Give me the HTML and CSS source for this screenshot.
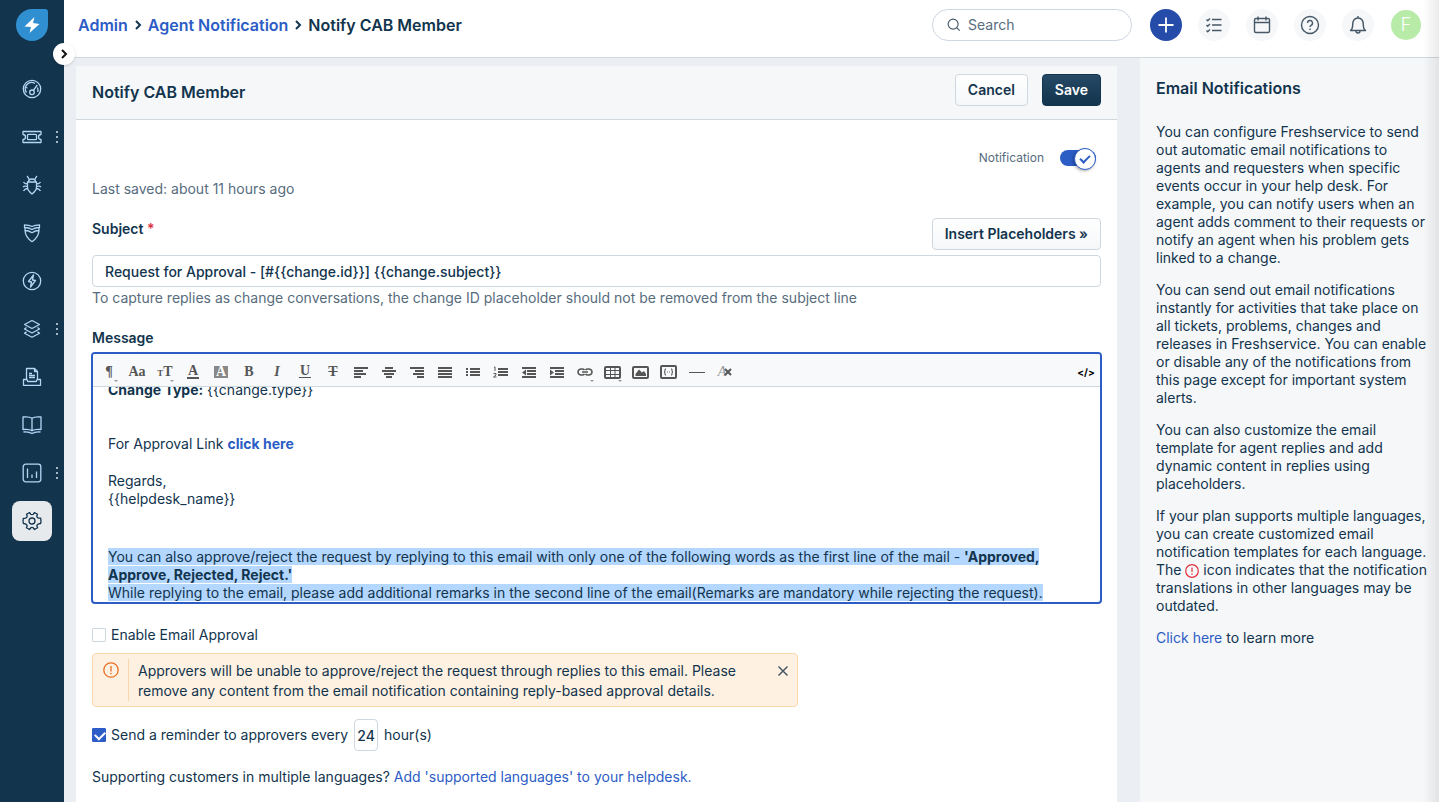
FILE: index.html
```html
<!DOCTYPE html>
<html lang="en">
<head>
    <meta charset="UTF-8">
    <meta name="viewport" content="width=device-width, initial-scale=1.0">
    <title>Notify CAB Member</title>
    <link rel="stylesheet" href="styles.css">
</head>
<body>
    <nav class="sidebar" aria-label="Main">
        <a class="logo" href="#" aria-label="Home">
            <svg width="32" height="32" viewBox="0 0 32 32"><path d="M16 0h13a3 3 0 0 1 3 3v13A16 16 0 1 1 16 0z" fill="#2f8fd0"/><path d="M18.500 8L8.500 17.500l6.500.500-1.500 6L23.500 15l-6.500-1z" fill="#fff"/></svg>
        </a>
        <button class="expand" type="button" aria-label="Expand menu">
            <svg width="10" height="12" viewBox="0 0 10 12" fill="none" stroke="#111" stroke-width="2"><path d="M3 2l4 4-4 4"/></svg>
        </button>
        <ul class="menu">
            <li><a href="#" aria-label="Dashboard">
                <svg viewBox="0 0 20 20"><circle cx="10" cy="10" r="8.700"/><path d="M4.500 13.500A6.300 6.300 0 0 1 13 4.500M11.300 11.500l4-5.500M15.500 8.500a6 6 0 0 1 .2 4.500M4 8.500l1.500.5"/><circle cx="10" cy="13.300" r="2.300"/></svg>
            </a></li>
            <li><a href="#" aria-label="Tickets">
                <svg viewBox="0 0 20 20"><path d="M1 4.500h18v3a2.500 2.500 0 0 0 0 5v3H1v-3a2.500 2.500 0 0 0 0-5z"/><rect x="5.500" y="7.300" width="9" height="5.400" rx="1"/></svg>
            </a><span class="dots"></span></li>
            <li><a href="#" aria-label="Problems">
                <svg viewBox="0 0 20 20"><path d="M5.500 7h9v5.500c0 2.500-2 4.500-4.500 6.500-2.500-2-4.500-4-4.500-6.500zM6.500 7c0-4 7-4 7 0M7 4.200Q6.500 2.500 5 1M13 4.200Q13.500 2.500 15 1M5.500 9Q2.500 9 1.500 7M5.500 11.500Q2.500 10.500 1 12M5.500 13.500Q3 13.500 1.500 16M14.500 9Q17.500 9 18.500 7M14.500 11.500Q17.500 10.500 19 12M14.500 13.500Q17 13.500 18.500 16"/></svg>
            </a></li>
            <li><a href="#" aria-label="Changes">
                <svg viewBox="0 0 20 20"><path d="M2.500 1.800c2.500 0 5 .2 7.500 1.700 2.500-1.500 5-1.700 7.500-1.700v2.700c-2.500 0-5 .4-7.500 2-2.500-1.600-5-2-7.500-2zM3 4.700v2.800c2.500 0 4.800.700 7 2.200 2.200-1.500 4.500-2.200 7-2.200V4.700M3 7.500c.300 5 3.300 8.700 7 11.200 3.700-2.500 6.700-6.200 7-11.200"/></svg>
            </a></li>
            <li><a href="#" aria-label="Releases">
                <svg viewBox="0 0 20 20"><circle cx="10" cy="10" r="8.700"/><path d="M11.500 4l-5 6.500 3 .5-1 5 5-6.500-3-.5z"/></svg>
            </a></li>
            <li><a href="#" aria-label="Assets">
                <svg viewBox="0 0 20 20"><path d="M10 1.500l7.500 4-7.500 4-7.500-4zM4.500 8.500l-2 1.500 7.500 4 7.500-4-2-1.500M4.500 12.700l-2 1.500 7.500 4 7.500-4-2-1.500"/></svg>
            </a><span class="dots"></span></li>
            <li><a href="#" aria-label="Contracts">
                <svg viewBox="0 0 20 20"><path d="M4.500 12.500V1.500h8l3 3v8M12.500 1.500v3h3M7 6.500h3M7 8.500h6M7 10.500h6M1.500 12.500h3.500l.7 2h8.600l.7-2h3.500v5.800h-17z"/></svg>
            </a></li>
            <li><a href="#" aria-label="Solutions">
                <svg viewBox="0 0 20 20"><path d="M10 3.300C8 1.800 4 1.700 1 2v12.500c3-.3 7-.2 9 1.300 2-1.500 6-1.600 9-1.300V2c-3-.3-7-.2-9 1.300zM10 3.300v12.500M1.500 17c3-.3 6-.2 8.500 1.500 2.500-1.700 5.500-1.800 8.500-1.500"/></svg>
            </a></li>
            <li><a href="#" aria-label="Analytics">
                <svg viewBox="0 0 20 20"><rect x="1.200" y="1.200" width="17.600" height="17.600" rx="2.500"/><path d="M5.500 5.500v9.500M10 11.500V15M14.500 8.500V15"/></svg>
            </a><span class="dots"></span></li>
            <li><a class="current" href="#" aria-label="Admin">
                <svg viewBox="0 0 20 20"><circle cx="10" cy="10" r="3"/><path d="M7.600 1.500L8.600 3.200Q10 4 11.400 3.200L12.400 1.500L15.500 3.200L14.700 5.200Q15 6.900 16.600 7.200H18.700L19 10.500L18.600 12.500L16.600 12.800Q15.100 13.400 14.800 14.900L15.600 16.700L12.500 18.500L11.300 16.900Q10 16 8.700 16.900L7.500 18.500L4.400 16.700L5.200 14.900Q5 13.400 3.400 12.800L1.400 12.500L1 10L1.300 7.500L3.400 7.200Q5 6.800 5.300 5.200L4.500 3.200Z"/></svg>
            </a></li>
        </ul>
    </nav>

    <div class="page">
        <header class="topbar">
            <nav class="breadcrumb" aria-label="Breadcrumb">
                <a href="#">Admin</a>
                <svg width="8" height="12" viewBox="0 0 8 12" fill="none" stroke="#12344d" stroke-width="2"><path d="M2 2l4 4-4 4"/></svg>
                <a href="#">Agent Notification</a>
                <svg width="8" height="12" viewBox="0 0 8 12" fill="none" stroke="#12344d" stroke-width="2"><path d="M2 2l4 4-4 4"/></svg>
                <span>Notify CAB Member</span>
            </nav>
            <div class="actions">
                <label class="search">
                    <svg width="16" height="16" viewBox="0 0 16 16" fill="none" stroke="#475867" stroke-width="1.300"><circle cx="7" cy="7" r="5.700"/><path d="M11 11l3.500 3.500"/></svg>
                    <input type="text" placeholder="Search" aria-label="Search">
                </label>
                <button class="round add" type="button" aria-label="New">
                    <svg viewBox="0 0 20 20"><path d="M10 2.500v15M2.500 10h15"/></svg>
                </button>
                <button class="round" type="button" aria-label="Tasks">
                    <svg viewBox="0 0 20 20"><path d="M8 4.500h9.500M8 10h9.500M8 15.500h9.500M2.500 4.500l1.200 1.200L6 3.500M2.500 10l1.200 1.200L6 9M2.500 15.500l1.200 1.200L6 14.500"/></svg>
                </button>
                <button class="round" type="button" aria-label="Calendar">
                    <svg viewBox="0 0 20 20"><rect x="2.500" y="3.500" width="15" height="14" rx="1.500"/><path d="M2.500 7.500h15M6 1.500v4M14 1.500v4"/></svg>
                </button>
                <button class="round" type="button" aria-label="Help">
                    <svg viewBox="0 0 20 20"><circle cx="10" cy="10" r="8.500"/><path d="M7.500 8a2.500 2.500 0 1 1 3.500 2.300c-.7.300-1 .8-1 1.700M10 13.500v1.500"/></svg>
                </button>
                <button class="round" type="button" aria-label="Notifications">
                    <svg viewBox="0 0 20 20"><path d="M10 1v2M2.500 15.500c1.500-1 2.200-2.500 2.200-5.500C4.700 6 6.500 3 10 3s5.300 3 5.300 7c0 3 .7 4.500 2.200 5.500zM8 16c0 2.600 4 2.600 4 0"/></svg>
                </button>
                <button class="avatar" type="button">F</button>
            </div>
        </header>

        <div class="content">
            <main class="panel">
                <div class="panel-head">
                    <h1>Notify CAB Member</h1>
                    <div class="head-buttons">
                        <button class="btn" type="button">Cancel</button>
                        <button class="btn primary" type="button">Save</button>
                    </div>
                </div>

                <form class="panel-body">
                    <div class="toggle-row">
                        <label for="notify">Notification</label>
                        <input class="toggle" type="checkbox" id="notify" checked>
                    </div>
                    <p class="saved">Last saved: about 11 hours ago</p>

                    <div class="subject-row">
                        <label class="label" for="subject">Subject <span class="required">*</span></label>
                        <button class="btn" type="button">Insert Placeholders »</button>
                    </div>
                    <input class="subject" type="text" id="subject" value="Request for Approval - [#{{change.id}}] {{change.subject}}">
                    <p class="hint">To capture replies as change conversations, the change ID placeholder should not be removed from the subject line</p>

                    <p class="label message-label" id="messageLabel">Message</p>
                    <div class="editor">
                        <div class="toolbar">
                            <button type="button" class="more" aria-label="Paragraph format">¶</button>
                            <button type="button" aria-label="Font family">Aa</button>
                            <button type="button" class="more" aria-label="Font size"><small>T</small>T</button>
                            <button type="button" aria-label="Text color"><span class="text-color">A</span></button>
                            <button type="button" aria-label="Background color"><span class="back-color">A</span></button>
                            <button type="button" aria-label="Bold">B</button>
                            <button type="button" aria-label="Italic"><i>I</i></button>
                            <button type="button" aria-label="Underline"><span class="underline">U</span></button>
                            <button type="button" aria-label="Strikethrough"><s>T</s></button>
                            <button type="button" aria-label="Align left"><svg viewBox="0 0 16 12"><path d="M1 2h14M1 5h9M1 8h12M1 11h7"/></svg></button>
                            <button type="button" aria-label="Align center"><svg viewBox="0 0 16 12"><path d="M4 2h8M1 5h14M3 8h10M5 11h6"/></svg></button>
                            <button type="button" aria-label="Align right"><svg viewBox="0 0 16 12"><path d="M1 2h14M6 5h9M4 8h11M8 11h7"/></svg></button>
                            <button type="button" aria-label="Justify"><svg viewBox="0 0 16 12"><path d="M1 2h14M1 5h14M1 8h14M1 11h14"/></svg></button>
                            <button type="button" aria-label="Bulleted list"><svg viewBox="0 0 16 12"><path d="M1 3h2M1 6h2M1 9h2M5 3h10M5 6h10M5 9h10"/></svg></button>
                            <button type="button" aria-label="Numbered list"><svg viewBox="0 0 16 12"><path d="M5 3h10M5 6h10M5 9h10"/><path class="thin" d="M1 1h1v4M.500 7.500H3v1.500L.500 11H3.500"/></svg></button>
                            <button type="button" aria-label="Outdent"><svg viewBox="0 0 16 12"><path d="M1 2h14M6 5h9M6 8h9M1 11h14"/><path class="solid" d="M5 3.500v6L1 6.500z"/></svg></button>
                            <button type="button" aria-label="Indent"><svg viewBox="0 0 16 12"><path d="M1 2h14M6 5h9M6 8h9M1 11h14"/><path class="solid" d="M1 3.500v6l4-3z"/></svg></button>
                            <button type="button" class="more" aria-label="Link"><svg viewBox="0 0 16 12"><path class="link" d="M7.500 4C6.500 2.500 1 2.300 1 6s5.500 3.500 6.500 2M8.500 4C9.500 2.500 15 2.300 15 6s-5.500 3.500-6.500 2M5 6h6"/></svg></button>
                            <button type="button" class="more" aria-label="Table"><svg class="large" viewBox="0 0 18 14"><rect x="1" y="2" width="15" height="11" rx="1"/><path class="thin" d="M2 5.500h13M2 9.500h13M6.500 3v9M11 3v9"/></svg></button>
                            <button type="button" aria-label="Image"><svg class="large" viewBox="0 0 18 14"><rect x="1" y="2" width="15" height="11" rx="1"/><path class="solid" d="M3.500 11V9L7 4.500l3 3L12 6l2 3v2z"/></svg></button>
                            <button type="button" aria-label="Placeholder"><svg class="large" viewBox="0 0 18 14"><rect x="1" y="1" width="15" height="12" rx="1"/><path class="thin" d="M6 4H5v2.500L4 7l1 .5V10h1M11 4h1v2.500l1 .5-1 .5V10h-1M7 7h.800M9.200 7h.800"/></svg></button>
                            <button type="button" aria-label="Horizontal line"><svg viewBox="0 0 16 12"><path class="thin" d="M0 6.500h16"/></svg></button>
                            <button type="button" aria-label="Clear formatting"><span class="clear">A</span><svg class="cross" viewBox="0 0 8 8"><path d="M1 1l6 6M7 1L1 7"/></svg></button>
                            <button type="button" class="code" aria-label="Code view">&lt;/&gt;</button>
                        </div>
                        <div class="message" contenteditable="true" role="textbox" aria-labelledby="messageLabel">
                            <p><b>Change Type:</b> {{change.type}}</p>
                            <p class="approval">For Approval Link <a href="#"><b>click here</b></a></p>
                            <p>Regards,<br>{{helpdesk_name}}</p>
                            <p class="reply"><mark>You can also approve/reject the request by replying to this email with only one of the following words as the first line of the mail - <b>'Approved, Approve, Rejected, Reject.'</b></mark><br><mark>While replying to the email, please add additional remarks in the second line of the email(Remarks are mandatory while rejecting the request).</mark></p>
                        </div>
                    </div>

                    <div class="check-row">
                        <input class="check" type="checkbox" id="emailApproval">
                        <label for="emailApproval">Enable Email Approval</label>
                    </div>

                    <div class="alert" role="alert">
                        <svg class="alert-icon" width="18" height="18" viewBox="0 0 18 18" fill="none" stroke="#e86f25" stroke-width="1.300"><circle cx="9" cy="9" r="7.200"/><path d="M9 5v5.500M9 11.800v1.500"/></svg>
                        <p>Approvers will be unable to approve/reject the request through replies to this email. Please remove any content from the email notification containing reply-based approval details.</p>
                        <button class="close" type="button" aria-label="Close">
                            <svg width="12" height="12" viewBox="0 0 12 12" fill="none" stroke="#475867" stroke-width="1.500"><path d="M1.500 1.500l9 9M10.500 1.500l-9 9"/></svg>
                        </button>
                    </div>

                    <div class="check-row reminder">
                        <input class="check" type="checkbox" id="reminder" checked>
                        <label for="reminder">Send a reminder to approvers every</label>
                        <input class="hours" type="text" value="24" aria-label="Hours">
                        <span>hour(s)</span>
                    </div>

                    <p class="languages">Supporting customers in multiple languages? <a href="#">Add 'supported languages' to your helpdesk.</a></p>
                </form>
            </main>

            <aside class="help">
                <h2>Email Notifications</h2>
                <p>You can configure Freshservice to send out automatic email notifications to agents and requesters when specific events occur in your help desk. For example, you can notify users when an agent adds comment to their requests or notify an agent when his problem gets linked to a change.</p>
                <p>You can send out email notifications instantly for activities that take place on all tickets, problems, changes and releases in Freshservice. You can enable or disable any of the notifications from this page except for important system alerts.</p>
                <p>You can also customize the email template for agent replies and add dynamic content in replies using placeholders.</p>
                <p>If your plan supports multiple languages, you can create customized email notification templates for each language. The <svg width="14" height="16" viewBox="1 0 14 16" fill="none" stroke="#e02f3c" stroke-width="1.200"><circle cx="8" cy="8" r="6.300"/><path d="M8 4.500v4.500M8 10.300v1.400"/></svg> icon indicates that the notification translations in other languages may be outdated.</p>
                <p><a href="#">Click here</a> to learn more</p>
            </aside>
        </div>
    </div>
</body>
</html>
```
FILE: styles.css
```css
* {
    box-sizing: border-box;
}

body {
    display: flex;
    min-height: 100vh;
    margin: 0;
    font-family: Inter, "Liberation Sans", sans-serif;
    font-size: 14px;
    line-height: 18px;
    color: #12344d;
    background-color: #ebeef3;
}

/* soft shade along the right edge of the window */
body::after {
    content: "";
    position: fixed;
    top: 0;
    right: 0;
    bottom: 0;
    width: 16px;
    background: linear-gradient(to right, rgba(0, 0, 0, 0), rgba(0, 0, 0, 0.08));
    pointer-events: none;
}

h1, h2, p, ul {
    margin: 0;
    padding: 0;
}

h1, h2 {
    font-size: 16px;
    line-height: 20px;
    font-weight: 600;
}

a {
    color: #2c5cc5;
    text-decoration: none;
}

button, input {
    font: inherit;
    color: inherit;
}

button {
    padding: 0;
    border: 0;
    background: none;
    cursor: pointer;
}

/* Sidebar */
.sidebar {
    position: relative;
    flex: none;
    width: 64px;
    padding-top: 9px;
    background-color: #12344d;
}

.logo {
    display: block;
    width: 32px;
    height: 32px;
    margin: 0 auto;
}

.expand {
    position: absolute;
    top: 43px;
    right: -11px;
    display: flex;
    align-items: center;
    justify-content: center;
    width: 22px;
    height: 22px;
    border-radius: 50%;
    background-color: #fff;
    box-shadow: 0 1px 3px rgba(0, 0, 0, 0.15);
}

.menu {
    display: grid;
    gap: 8px;
    margin-top: 28px;
    list-style: none;
}

.menu li {
    position: relative;
}

.menu a {
    display: flex;
    align-items: center;
    justify-content: center;
    width: 40px;
    height: 40px;
    margin: 0 auto;
    border-radius: 8px;
    color: #b3d7f5;
}

.menu svg {
    width: 20px;
    height: 20px;
    fill: none;
    stroke: currentColor;
    stroke-width: 1.3;
    stroke-linejoin: round;
}

.menu .current {
    color: #12344d;
    background-color: #e7eaec;
}

.dots {
    position: absolute;
    top: 14px;
    right: 6px;
    width: 2px;
    height: 2px;
    background-color: #a3b6c6;
    box-shadow: 0 5px #a3b6c6, 0 10px #a3b6c6;
}

/* Top bar */
.page {
    display: flex;
    flex: 1;
    flex-direction: column;
    min-width: 0;
}

.topbar {
    display: flex;
    align-items: center;
    justify-content: space-between;
    height: 58px;
    padding: 0 18px 8px 14px;
    border-bottom: 1px solid #cfd7df;
    background-color: #fff;
}

.breadcrumb {
    display: flex;
    align-items: center;
    gap: 6px;
    font-size: 16px;
    line-height: 20px;
    font-weight: 600;
}

.actions {
    display: flex;
    align-items: center;
    gap: 16px;
}

.search {
    display: flex;
    align-items: center;
    gap: 7px;
    width: 200px;
    height: 32px;
    margin-right: 2px;
    padding: 0 14px;
    border: 1px solid #cfd7df;
    border-radius: 16px;
}

.search input {
    width: 100%;
    padding: 0;
    border: 0;
    outline: 0;
    background: none;
}

.search input::placeholder {
    color: #576c7d;
    opacity: 1;
}

.round, .avatar {
    display: flex;
    align-items: center;
    justify-content: center;
    width: 32px;
    height: 32px;
    border-radius: 50%;
    background-color: #f5f7f9;
}

.round svg {
    width: 20px;
    height: 20px;
    fill: none;
    stroke: #475867;
    stroke-width: 1.4;
    stroke-linejoin: round;
}

.round.add {
    background-color: #264caa;
}

.round.add svg {
    stroke: #fff;
    stroke-width: 1.8;
}

.avatar {
    width: 30px;
    height: 30px;
    margin-left: 1px;
    font-size: 18px;
    font-weight: 300;
    color: #fff;
    background-color: #b8eba8;
}

/* Main panel */
.content {
    display: flex;
    flex: 1;
    gap: 23px;
    padding-left: 12px;
}

.panel {
    flex: 1;
    min-width: 0;
    margin-top: 8px;
    background-color: #fff;
}

.panel-head {
    display: flex;
    justify-content: space-between;
    height: 54px;
    padding: 8px 16px;
    border-bottom: 1px solid #cfd7df;
    background-color: #f5f7f9;
}

.panel-head h1 {
    line-height: 36px;
}

.head-buttons {
    display: flex;
    gap: 14px;
}

.btn {
    height: 32px;
    padding: 0 12px;
    border: 1px solid #cfd7df;
    border-radius: 4px;
    font-weight: 600;
    background: linear-gradient(#fff, #f5f7f9);
}

.btn.primary {
    border-color: #12344d;
    color: #fff;
    background: linear-gradient(#264966, #12344d);
}

.panel-body {
    padding: 28px 16px 16px;
}

.toggle-row {
    display: flex;
    align-items: center;
    justify-content: flex-end;
    gap: 16px;
    padding-right: 5px;
    font-size: 12px;
    line-height: 20px;
    color: #576c7d;
}

.toggle {
    appearance: none;
    position: relative;
    width: 36px;
    height: 16px;
    margin: 0;
    border-radius: 8px;
    background-color: #2c5cc5;
}

.toggle::before {
    content: "";
    position: absolute;
    top: -2px;
    right: 0;
    width: 20px;
    height: 20px;
    border: 1px solid #2c5cc5;
    border-radius: 50%;
    background-color: #fff;
    box-shadow: -1px 1px 3px rgba(0, 0, 0, 0.3);
}

.toggle::after {
    content: "";
    position: absolute;
    top: 5px;
    right: 6px;
    width: 8px;
    height: 4px;
    border: solid #2c5cc5;
    border-width: 0 0 2px 2px;
    transform: rotate(-45deg);
}

.saved, .hint {
    color: #576c7d;
}

.saved {
    margin-top: 12px;
}

.label {
    font-weight: 600;
}

.subject-row {
    display: flex;
    align-items: flex-start;
    justify-content: space-between;
    margin-top: 20px;
}

.subject-row .label {
    padding-top: 2px;
}

.required {
    color: #e02f3c;
}

.subject {
    display: block;
    width: 100%;
    height: 32px;
    margin-top: 5px;
    padding: 0 12px;
    border: 1px solid #cfd7df;
    border-radius: 4px;
    font-weight: 500;
}

.hint {
    margin-top: 2px;
}

.message-label {
    margin-top: 22px;
}

/* Editor */
.editor {
    margin: 5px -1px 0;
    border: 2px solid #2c5cc5;
    border-radius: 4px;
}

.toolbar {
    display: flex;
    height: 33px;
    padding: 3px 0 0 2px;
    border-bottom: 1px solid #cfd7df;
    border-radius: 2px 2px 0 0;
    background-color: #f8f9fb;
}

.toolbar button {
    position: relative;
    display: flex;
    align-items: center;
    justify-content: center;
    width: 28px;
    font-family: "Liberation Serif", serif;
    font-size: 14px;
    font-weight: 700;
    color: #555;
}

.toolbar small {
    padding-top: 2px;
    font-size: 9px;
}

.toolbar .more::after {
    content: "";
    position: absolute;
    right: 5px;
    bottom: 4px;
    border: 2px solid transparent;
    border-top-color: #999;
    border-bottom: 0;
}

.toolbar svg {
    width: 16px;
    height: 12px;
    fill: none;
    stroke: #555;
    stroke-width: 2;
}

.toolbar svg.large {
    width: 18px;
    height: 14px;
}

.toolbar svg .thin {
    stroke-width: 1;
}

.toolbar svg .link {
    stroke-width: 1.5;
}

.toolbar svg .solid {
    fill: #555;
    stroke: none;
}

.text-color, .underline {
    padding: 0 1px;
    border-bottom: 1px solid #555;
    line-height: 12px;
}

.text-color {
    border-bottom-width: 2px;
}

.back-color {
    width: 14px;
    line-height: 12px;
    color: #fff;
    background-color: #888;
}

.clear {
    font-style: italic;
    font-weight: 400;
    color: #999;
}

.toolbar svg.cross {
    width: 8px;
    height: 8px;
    margin-left: -2px;
}

.toolbar .code {
    margin-left: auto;
    font-family: Inter, sans-serif;
    font-size: 10px;
    color: #000;
}

/* the newest lines stay in view, the rest is clipped at the top */
.message {
    display: flex;
    flex-direction: column;
    justify-content: flex-end;
    height: 215px;
    padding: 0 12px 0 15px;
    overflow: hidden;
    outline: 0;
}

.message p {
    flex: none;
    margin-bottom: 18px;
}

.message .approval {
    margin: 18px 0 19px;
}

.message .reply {
    margin: 22px 0 0;
}

mark {
    color: inherit;
    background-color: #b3d7ff;
}

/* Below the editor */
.check-row {
    display: flex;
    align-items: center;
    gap: 5px;
    margin-top: 22px;
}

.check {
    appearance: none;
    position: relative;
    width: 14px;
    height: 14px;
    margin: 0;
    border: 1px solid #cfd7df;
    border-radius: 1px;
    background-color: #fff;
}

.check:checked {
    border-color: #2c5cc5;
    background-color: #2c5cc5;
}

.check:checked::after {
    content: "";
    position: absolute;
    top: 2px;
    left: 2px;
    width: 8px;
    height: 5px;
    border: solid #fff;
    border-width: 0 0 2px 2px;
    transform: rotate(-45deg);
}

.alert {
    display: flex;
    align-items: flex-start;
    max-width: 706px;
    margin-top: 9px;
    padding: 5px 8px 5px 9px;
    border: 1px solid #fbd7ac;
    border-radius: 4px;
    line-height: 20px;
    background-color: #fef1e1;
}

.alert-icon {
    flex: none;
    margin: 2px 8px 0 0;
}

.alert p {
    flex: 1;
    padding: 2px 24px 0 9px;
    border-left: 1px solid #fbd7ac;
}

.close {
    display: flex;
    margin-top: 6px;
}

.reminder {
    margin-top: 12px;
}

.hours {
    width: 24px;
    height: 32px;
    margin: 0 1px;
    padding: 0;
    border: 1px solid #cfd7df;
    border-radius: 4px;
    font-weight: 500;
    text-align: center;
}

.languages {
    margin-top: 17px;
}

/* Help column */
.help {
    flex: none;
    width: 299px;
    padding: 20px 6px 20px 16px;
    background-color: #f5f7f9;
}

.help h2 {
    margin-bottom: 25px;
}

.help p {
    margin-bottom: 14px;
}

.help svg {
    margin: -2px 0;
    vertical-align: -2px;
}

@media screen and (max-width: 900px) {
    .content {
        flex-direction: column;
    }

    .help {
        width: auto;
    }
}
```
